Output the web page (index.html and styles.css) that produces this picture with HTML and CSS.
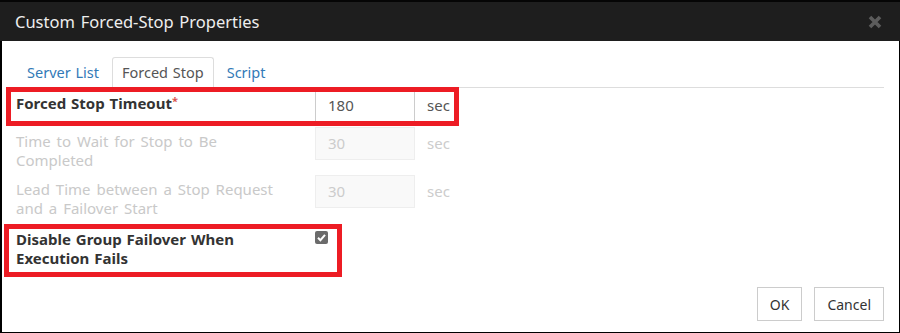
FILE: index.html
```html
<!DOCTYPE html>
<html>
<head>
<meta charset="utf-8">
<link rel="stylesheet" href="styles.css">
</head>
<body>
<div class="dialog">
  <div class="titlebar">
    <span class="title">Custom Forced-Stop Properties</span>
    <span class="close"><svg width="14" height="14" viewBox="0 0 14 14"><path d="M2 2 L12 12 M12 2 L2 12" stroke="#5c5c5c" stroke-width="3.6" stroke-linecap="butt"/></svg></span>
  </div>
  <div class="body">
    <ul class="tabs">
      <li class="tab">Server List</li>
      <li class="tab active">Forced Stop</li>
      <li class="tab">Script</li>
    </ul>
    <div class="form">
      <div class="row">
        <div class="label strong">Forced Stop Timeout<span class="req">*</span></div>
        <div class="input">180</div>
        <div class="unit">sec</div>
      </div>
      <div class="row disabled">
        <div class="label">Time to Wait for Stop to Be<br>Completed</div>
        <div class="input">30</div>
        <div class="unit">sec</div>
      </div>
      <div class="row disabled">
        <div class="label">Lead Time between a Stop Request<br>and a Failover Start</div>
        <div class="input">30</div>
        <div class="unit">sec</div>
      </div>
      <div class="row check-row">
        <div class="label strong">Disable Group Failover When<br>Execution Fails</div>
        <div class="checkbox"><svg width="13" height="13" viewBox="0 0 13 13"><rect x="0" y="0" width="13" height="13" rx="2" fill="#6b6b6b"/><path d="M3 6.8 L5.4 9.2 L10 3.8" fill="none" stroke="#fff" stroke-width="2"/></svg></div>
      </div>
    </div>
    <div class="footer">
      <button class="btn">OK</button>
      <button class="btn">Cancel</button>
    </div>
  </div>
  <div class="mark mark1"></div>
  <div class="mark mark2"></div>
</div>
</body>
</html>
```
FILE: styles.css
```css
html, body {
  margin: 0;
  padding: 0;
  background: #fff;
}
body {
  font-family: "Noto Sans", "Open Sans", sans-serif;
  font-size: 15px;
  color: #333;
}
.dialog {
  position: relative;
  width: 900px;
  height: 333px;
  box-sizing: border-box;
  display: flex;
  flex-direction: column;
  border-left: 2px solid #000;
  border-right: 1px solid #000;
  border-bottom: 1px solid #000;
}
.titlebar {
  height: 39px;
  margin: 0 -1px 0 -2px;
  border-top: 2px solid #050505;
  background: #1e1e1e;
  display: flex;
  align-items: center;
  justify-content: space-between;
  padding: 0 18px 0 15px;
}
.title {
  color: #eee;
  font-size: 16.5px;
  word-spacing: 1.5px;
  line-height: 20px;
}
.close {
  line-height: 0;
}
.body {
  flex: 1;
  display: flex;
  flex-direction: column;
  padding: 16px 15px 0 14px;
}
.tabs {
  list-style: none;
  margin: 0;
  padding: 0 0 0 1px;
  display: flex;
  border-bottom: 1px solid #ddd;
  height: 30px;
}
.tab {
  padding: 0 9px;
  line-height: 29px;
  margin-right: 3px;
  border: 1px solid transparent;
  border-bottom: none;
  color: #337ab7;
  border-radius: 3px 3px 0 0;
  font-size: 14.5px;
  word-spacing: 1px;
}
.tab.active {
  color: #555;
  border-color: #ddd;
  background: #fff;
  height: 30px;
  margin-bottom: -1px;
}
.form {
  display: flex;
  flex-direction: column;
  gap: 5px;
  padding-top: 1px;
}
.row {
  display: flex;
  align-items: flex-start;
}
.label {
  width: 299px;
  padding-top: 5px;
  line-height: 19px;
  font-size: 15px;
  word-spacing: 2px;
}
.strong {
  font-weight: bold;
  word-spacing: 1px;
}
.req {
  color: #d9534f;
  font-size: 11px;
  vertical-align: top;
  position: relative;
  top: -3px;
}
.input {
  width: 100px;
  height: 33px;
  box-sizing: border-box;
  border: 1px solid #ccc;
  padding: 0 12px;
  line-height: 31px;
  color: #555;
}
.unit {
  line-height: 33px;
  padding-left: 12px;
  color: #555;
}
.disabled .label {
  color: #c9c9c9;
}
.disabled .input {
  background: #f9f9f9;
  border-color: #eee;
  color: #ccc;
}
.disabled .unit {
  color: #ccc;
}
.check-row {
  margin-top: 2px;
}
.checkbox {
  padding-top: 6px;
  line-height: 0;
}
.footer {
  margin-top: auto;
  display: flex;
  justify-content: flex-end;
  gap: 12px;
  padding-bottom: 11px;
}
.btn {
  font-family: "Noto Sans", "Open Sans", sans-serif;
  font-size: 14px;
  color: #333;
  background: #fff;
  border: 1px solid #ccc;
  height: 34px;
  padding: 0 12px;
  border-radius: 0;
}
.mark {
  position: absolute;
  border: 5px solid #ed1c24;
  box-sizing: border-box;
  pointer-events: none;
}
.mark1 {
  left: 4px;
  top: 87px;
  width: 453px;
  height: 39px;
}
.mark2 {
  left: 2px;
  top: 224px;
  width: 338px;
  height: 53px;
}
```
